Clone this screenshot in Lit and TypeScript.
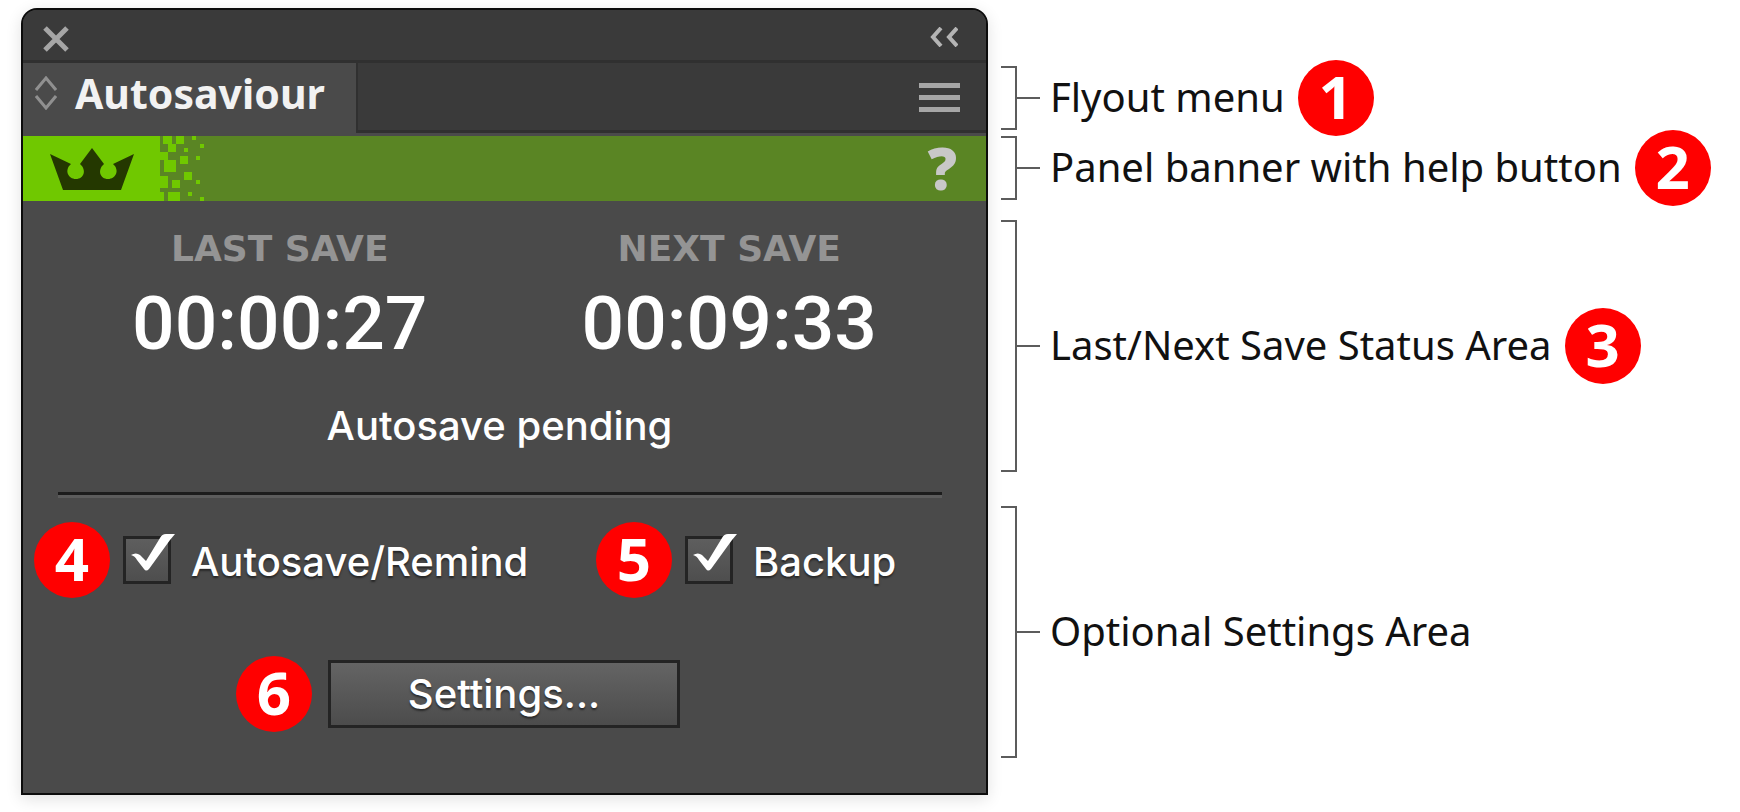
import { LitElement, html, svg, css } from "lit";
import { customElement, property } from "lit/decorators.js";

@customElement("number-badge")
class NumberBadge extends LitElement {
  @property() value = "";
  static styles = css`
    :host {
      flex: none;
      display: flex;
      align-items: center;
      justify-content: center;
      box-sizing: border-box;
      width: 76px;
      height: 76px;
      padding-bottom: 4px;
      border-radius: 50%;
      background: #ff0000;
      color: #fff;
      font: 700 60px/60px "Noto Sans", sans-serif;
    }
  `;
  render() {
    return html`<span>${this.value}</span>`;
  }
}

@customElement("panel-callout")
class PanelCallout extends LitElement {
  @property() label = "";
  @property() badge = "";
  static styles = css`
    :host {
      display: flex;
      align-items: center;
      color: #111;
      font: 400 40px/48px "Noto Sans", sans-serif;
      white-space: nowrap;
    }
    .bracket {
      flex: none;
      align-self: stretch;
      box-sizing: border-box;
      width: 16px;
      border: 2px solid #5c5c5c;
      border-left: none;
    }
    .stub {
      flex: none;
      width: 23px;
      height: 2px;
      background: #5c5c5c;
    }
    .label {
      margin: 0 13px 0 10px;
      padding-bottom: 2px;
    }
    number-badge {
      margin: -6px 0;
    }
  `;
  render() {
    return html`
      <span class="bracket"></span><span class="stub"></span>
      <span class="label">${this.label}</span>
      ${this.badge ? html`<number-badge value=${this.badge}></number-badge>` : ""}
    `;
  }
}

/* Banner mosaic: [x, y, width, height] */
const PIXELS = [
  [3, 0, 9, 8], [16, 0, 8, 8], [8, 8, 8, 8], [0, 16, 8, 8], [24, 12, 4, 4],
  [32, 0, 4, 4], [40, 8, 4, 4], [36, 20, 4, 4], [20, 20, 8, 8], [4, 24, 12, 12],
  [24, 36, 8, 8], [0, 40, 8, 12], [12, 44, 8, 8], [36, 44, 4, 4], [0, 56, 4, 9],
  [8, 56, 12, 9], [28, 56, 4, 4], [40, 61, 4, 4],
];

@customElement("app-root")
class AppRoot extends LitElement {
  static styles = css`
    :host {
      display: grid;
      grid-template-columns: minmax(0, 967fr) minmax(0, 739fr);
      column-gap: 13px;
      box-sizing: border-box;
      min-height: 100vh;
      padding: 8px 0 16px 21px;
      background: #fff;
      align-items: start;
    }
    button {
      font: inherit;
      color: inherit;
      background: none;
      border: none;
      padding: 0;
      margin: 0;
    }
    svg {
      display: block;
    }
    .panel {
      box-sizing: border-box;
      border: 2px solid #0c0c0c;
      border-radius: 16px 16px 0 0;
      background: #4a4a4a;
      color: #fff;
      box-shadow: 0 4px 16px rgba(0, 0, 0, 0.12);
      overflow: hidden;
      font: 500 40px/48px Inter, sans-serif;
    }
    .titlebar {
      display: flex;
      justify-content: space-between;
      align-items: center;
      box-sizing: border-box;
      height: 53px;
      padding: 8px 28px 0 20px;
      background: #3a3a3a;
      border-bottom: 3px solid #303030;
    }
    .collapse {
      padding-bottom: 4px;
    }
    .tabs {
      display: flex;
      justify-content: space-between;
      align-items: stretch;
      height: 73px;
      background: #4a4a4a;
    }
    .tab {
      display: flex;
      align-items: center;
      gap: 18px;
      padding: 0 31px 14px 12px;
      font: 700 41px/48px "Noto Sans", sans-serif;
      color: #f2f2f2;
    }
    .tabfill {
      flex: 1;
      display: flex;
      justify-content: flex-end;
      align-items: center;
      margin-bottom: 3px;
      padding: 3px 26px 0 0;
      background: #3a3a3a;
      border-left: 2px solid #303030;
      border-bottom: 3px solid #303030;
    }
    .banner {
      display: flex;
      align-items: center;
      height: 65px;
      background: #5a8524;
    }
    .logo {
      display: flex;
      align-items: center;
      justify-content: center;
      width: 137px;
      height: 65px;
      background: #70c800;
    }
    .help {
      margin-left: auto;
      padding: 0 29px 2px 0;
      font: 900 58px/60px "Noto Sans", sans-serif;
      color: #c8c8c8;
    }
    .status {
      display: grid;
      grid-template-columns: 1fr 1fr;
      padding: 26px 32px 0 32px;
      text-align: center;
    }
    .caption {
      font: 700 36px/44px "DejaVu Sans", sans-serif;
      color: #949494;
    }
    .time {
      font: 500 75px/88px Roboto, sans-serif;
      margin-top: 8px;
    }
    .message {
      margin: 35px 10px 0 0;
      text-align: center;
    }
    .rule {
      height: 3px;
      margin: 42px 44px 0 35px;
      border: none;
      background: #1c1c1c;
      box-shadow: 0 3px 0 #5c5c5c;
    }
    .options {
      display: grid;
      grid-template-columns: 562fr 390fr;
      padding: 27px 0 0 11px;
    }
    .option {
      display: flex;
      align-items: center;
    }
    .option label {
      margin-left: 20px;
      padding-top: 4px;
      text-shadow: 0 2px 2px rgba(0, 0, 0, 0.5);
    }
    .box {
      position: relative;
      margin-left: 13px;
    }
    .box input {
      appearance: none;
      box-sizing: border-box;
      width: 48px;
      height: 48px;
      margin: 0;
      border: 3px solid #242424;
      background: linear-gradient(#5e5e5e, #4e4e4e);
      display: block;
    }
    .box svg {
      position: absolute;
      left: 8px;
      top: -2px;
      display: none;
      pointer-events: none;
    }
    .box input:checked + svg {
      display: block;
    }
    .actions {
      display: flex;
      justify-content: flex-start;
      align-items: center;
      gap: 16px;
      padding: 58px 0 61px 213px;
    }
    .settings {
      box-sizing: border-box;
      width: 352px;
      height: 68px;
      border: 3px solid #242424;
      background: linear-gradient(#646464, #4c4c4c);
      text-shadow: 0 2px 2px rgba(0, 0, 0, 0.5);
    }
    .callouts {
      display: grid;
      grid-template-rows: 64px 64px 252px 252px;
      padding-top: 58px;
    }
    .banner-note {
      margin-top: 6px;
      margin-bottom: -6px;
    }
    .status-note {
      margin-top: 26px;
      margin-bottom: -26px;
    }
    .settings-note {
      margin-top: 60px;
      margin-bottom: -60px;
    }
  `;

  private option(id: string, badge: string, text: string) {
    return html`<div class="option">
      <number-badge value=${badge}></number-badge>
      <span class="box">
        <input type="checkbox" id=${id} checked />
        <svg width="44" height="38" viewBox="0 0 44 38">
          <path d="M0 21 Q5 18 9 21 L15 27 L29 4 Q31 0 35 0 L44 0 L39 6 L18 35 Q15 38 13 35 L6 26 Q4 22 0 21 Z" fill="#fff" />
        </svg>
      </span>
      <label for=${id}>${text}</label>
    </div>`;
  }

  render() {
    return html`
      <section class="panel" aria-label="Autosaviour">
        <header class="titlebar">
          <button aria-label="Close">
            <svg width="26" height="26" viewBox="0 0 26 26" stroke="#a6a6a6" stroke-width="5">
              <path d="M2 2 L24 24 M24 2 L2 24" />
            </svg>
          </button>
          <button class="collapse" aria-label="Collapse">
            <svg width="28" height="20" viewBox="0 0 28 20" fill="none" stroke="#b4b4b4" stroke-width="4">
              <path d="M11 1 L3 10 L11 19 M27 1 L19 10 L27 19" />
            </svg>
          </button>
        </header>
        <div class="tabs">
          <div class="tab">
            <svg width="22" height="34" viewBox="0 0 22 34" fill="none" stroke="#909090" stroke-width="3">
              <path d="M1 14 L11 2 L21 14 M1 20 L11 32 L21 20" />
            </svg>
            <span>Autosaviour</span>
          </div>
          <div class="tabfill">
            <button aria-label="Flyout menu">
              <svg width="41" height="30" viewBox="0 0 41 30" fill="#a6a6a6">
                <path d="M0 0h41v5H0z M0 12h41v5H0z M0 24h41v5H0z" />
              </svg>
            </button>
          </div>
        </div>
        <div class="banner">
          <div class="logo">
            <svg width="84" height="42" viewBox="0 0 84 42" fill="#243800">
              <path d="M0 6 L21 16 C14 22 18 31 26 31 C34 31 37 22 30 16 L42 0 L54 16 C47 22 50 31 58 31 C66 31 70 22 63 16 L84 6 L71 42 L13 42 Z" />
            </svg>
          </div>
          <svg width="44" height="65" viewBox="0 0 44 65" fill="#70c800">
            ${PIXELS.map(([x, y, w, h]) => svg`<rect x=${x} y=${y} width=${w} height=${h} />`)}
          </svg>
          <button class="help" aria-label="Help">?</button>
        </div>
        <div class="status">
          <div>
            <div class="caption">LAST SAVE</div>
            <div class="time">00:00:27</div>
          </div>
          <div>
            <div class="caption">NEXT SAVE</div>
            <div class="time">00:09:33</div>
          </div>
        </div>
        <p class="message">Autosave pending</p>
        <hr class="rule" />
        <div class="options">
          ${this.option("autosave", "4", "Autosave/Remind")}
          ${this.option("backup", "5", "Backup")}
        </div>
        <div class="actions">
          <number-badge value="6"></number-badge>
          <button class="settings">Settings...</button>
        </div>
      </section>
      <aside class="callouts">
        <panel-callout label="Flyout menu" badge="1"></panel-callout>
        <panel-callout class="banner-note" label="Panel banner with help button" badge="2"></panel-callout>
        <panel-callout class="status-note" label="Last/Next Save Status Area" badge="3"></panel-callout>
        <panel-callout class="settings-note" label="Optional Settings Area"></panel-callout>
      </aside>
    `;
  }
}
